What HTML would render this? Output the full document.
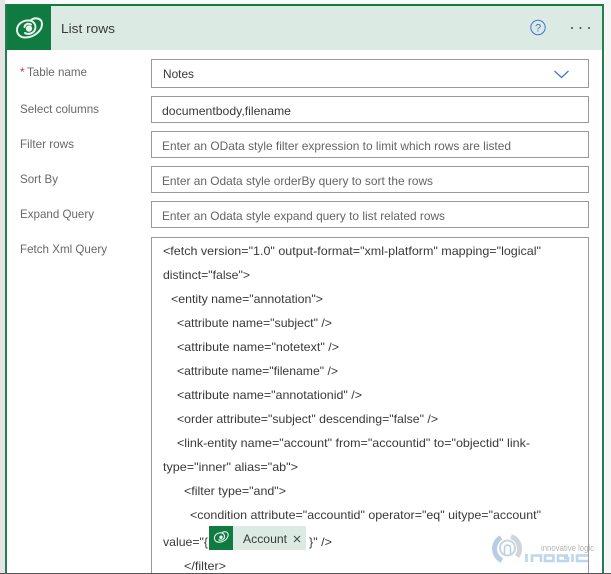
<!DOCTYPE html>
<html><head><meta charset="utf-8"><style>
html,body{margin:0;padding:0;background:#fff;width:611px;height:574px;overflow:hidden}
svg{display:block}
text{font-family:"Liberation Sans",sans-serif;font-size:12px;fill:#3a3938}
.l{fill:#6a6866}
.p{fill:#666462}
.b{fill:none;stroke:#999;stroke-width:1}
</style></head><body>
<svg width="611" height="574" viewBox="0 0 611 574" xmlns="http://www.w3.org/2000/svg">
<rect width="611" height="574" fill="#fff"/>
<rect x="0" y="0" width="611" height="4" fill="#fafafa"/>
<rect x="0" y="0" width="5" height="574" fill="#e4e4e4"/>
<rect x="605" y="0" width="6" height="574" fill="#f6f6f6"/>
<rect x="5" y="4" width="599" height="2" fill="#107c41"/>
<rect x="5" y="4" width="2" height="570" fill="#237f52"/>
<rect x="602" y="4" width="2" height="570" fill="#237f52"/>
<rect x="7" y="6" width="595" height="44" fill="#dbebe3"/>
<rect x="7" y="6" width="44" height="44" fill="#0f7b41"/>
<g fill="none" stroke="#e6f2ec" stroke-width="2" stroke-linecap="round">
<path d="M31 20C35 17 42 18 42 24C42 31 34 37.5 25 37.5C20 37.5 17 34 17 30C17 24 23 20 29 20.500C34 21 36.500 25 35 29.500C33.500 33.500 28 35 25 33"/>
<path d="M24.500 27C25 24 28 23 31 24.500"/>
</g>
<circle cx="29" cy="28.500" r="3.200" fill="#e6f2ec"/>
<text x="61" y="33" style="font-size:13px" textLength="54" lengthAdjust="spacingAndGlyphs">List rows</text>
<circle cx="538" cy="27.500" r="7.200" fill="none" stroke="#3f72d8" stroke-width="1"/>
<text x="538" y="31.500" text-anchor="middle" style="font-size:11px;fill:#3f72d8">?</text>
<circle cx="572" cy="28" r="1" fill="#444"/><circle cx="580.500" cy="28" r="1" fill="#444"/><circle cx="589" cy="28" r="1" fill="#444"/>

<text x="20" y="76" style="fill:#d13438">*</text>
<text x="27" y="76" class="l" textLength="60" lengthAdjust="spacingAndGlyphs">Table name</text>
<text x="20" y="113" class="l" textLength="79" lengthAdjust="spacingAndGlyphs">Select columns</text>
<text x="20" y="148" class="l" textLength="54" lengthAdjust="spacingAndGlyphs">Filter rows</text>
<text x="20" y="183" class="l" textLength="38" lengthAdjust="spacingAndGlyphs">Sort By</text>
<text x="20" y="218" class="l" textLength="74" lengthAdjust="spacingAndGlyphs">Expand Query</text>
<text x="20" y="253" class="l" textLength="87" lengthAdjust="spacingAndGlyphs">Fetch Xml Query</text>

<rect class="b" x="151.500" y="59.500" width="437" height="28"/>
<rect class="b" x="151.500" y="96.500" width="437" height="26"/>
<rect class="b" x="151.500" y="131.500" width="437" height="26"/>
<rect class="b" x="151.500" y="166.500" width="437" height="26"/>
<rect class="b" x="151.500" y="201.500" width="437" height="26"/>
<path class="b" d="M151.500 575V237.500H588.500V575"/>

<text x="163" y="78" textLength="31" lengthAdjust="spacingAndGlyphs">Notes</text>
<path d="M554.500 71l7 6.500 7-6.500" fill="none" stroke="#3f72d8" stroke-width="1.200"/>
<text x="162" y="115" textLength="129" lengthAdjust="spacingAndGlyphs">documentbody,filename</text>
<text x="162" y="150" class="p" textLength="349" lengthAdjust="spacingAndGlyphs">Enter an OData style filter expression to limit which rows are listed</text>
<text x="162" y="185" class="p" textLength="271" lengthAdjust="spacingAndGlyphs">Enter an Odata style orderBy query to sort the rows</text>
<text x="162" y="220" class="p" textLength="283" lengthAdjust="spacingAndGlyphs">Enter an Odata style expand query to list related rows</text>

<text x="163" y="255" textLength="378" lengthAdjust="spacingAndGlyphs">&lt;fetch version="1.0" output-format="xml-platform" mapping="logical"</text>
<text x="163" y="279" textLength="87" lengthAdjust="spacingAndGlyphs">distinct="false"&gt;</text>
<text x="171" y="303" textLength="152" lengthAdjust="spacingAndGlyphs">&lt;entity name="annotation"&gt;</text>
<text x="177" y="327" textLength="155" lengthAdjust="spacingAndGlyphs">&lt;attribute name="subject" /&gt;</text>
<text x="177" y="351" textLength="162" lengthAdjust="spacingAndGlyphs">&lt;attribute name="notetext" /&gt;</text>
<text x="177" y="375" textLength="161" lengthAdjust="spacingAndGlyphs">&lt;attribute name="filename" /&gt;</text>
<text x="177" y="399" textLength="185" lengthAdjust="spacingAndGlyphs">&lt;attribute name="annotationid" /&gt;</text>
<text x="177" y="423" textLength="261" lengthAdjust="spacingAndGlyphs">&lt;order attribute="subject" descending="false" /&gt;</text>
<text x="177" y="447" textLength="353" lengthAdjust="spacingAndGlyphs">&lt;link-entity name="account" from="accountid" to="objectid" link-</text>
<text x="163" y="471" textLength="135" lengthAdjust="spacingAndGlyphs">type="inner" alias="ab"&gt;</text>
<text x="184" y="495" textLength="102" lengthAdjust="spacingAndGlyphs">&lt;filter type="and"&gt;</text>
<text x="190" y="519" textLength="351" lengthAdjust="spacingAndGlyphs">&lt;condition attribute="accountid" operator="eq" uitype="account"</text>
<text x="163" y="546" textLength="45" lengthAdjust="spacingAndGlyphs">value="{</text>
<rect x="209" y="526" width="97" height="24" fill="#dbebe3"/>
<rect x="209" y="526" width="24" height="24" fill="#0f7b41"/>
<g transform="translate(221 537) scale(.55) translate(-29 -28)">
<g fill="none" stroke="#e6f2ec" stroke-width="2" stroke-linecap="round">
<path d="M31 20C35 17 42 18 42 24C42 31 34 37.500 25 37.500C20 37.500 17 34 17 30C17 24 23 20 29 20.500C34 21 36.500 25 35 29.500C33.500 33.500 28 35 25 33"/>
</g>
<circle cx="29" cy="28.500" r="3.200" fill="#e6f2ec"/>
</g>
<text x="243" y="543" textLength="44" lengthAdjust="spacingAndGlyphs">Account</text>
<path d="M294 536l6 6M300 536l-6 6" stroke="#444" stroke-width="1"/>
<text x="309" y="546" textLength="23" lengthAdjust="spacingAndGlyphs">}" /&gt;</text>
<text x="184" y="570" textLength="42" lengthAdjust="spacingAndGlyphs">&lt;/filter&gt;</text>

<path d="M501 537.500a13 13 0 0 0 1 23" fill="none" stroke="#b7cde2" stroke-width="5"/>
<path d="M511 536.500a13 13 0 0 1 6 20" fill="none" stroke="#d2d5d8" stroke-width="5"/>
<circle cx="507.500" cy="548" r="7.500" fill="none" stroke="#c3d5e6" stroke-width="2"/>
<path d="M504.500 554v-6a3 3 0 0 1 6 0v6" fill="none" stroke="#b7cde2" stroke-width="1.500"/>
<text x="541" y="551" style="font-size:9px;fill:#b5b5b5" textLength="53" lengthAdjust="spacingAndGlyphs">innovative logic</text>
<g fill="none" stroke="#bcd6ec" stroke-width="2.600">
<path d="M526.500 554v8M532 562v-6.500h9V562M545 555.500h8.500v5.500H545zM568 555.500h-10V561h10v-3h-4M572.500 554v8M588 555.500h-11V561h11"/>
</g>
<rect x="0" y="573" width="611" height="1" fill="#555"/>
</svg>
</body></html>
